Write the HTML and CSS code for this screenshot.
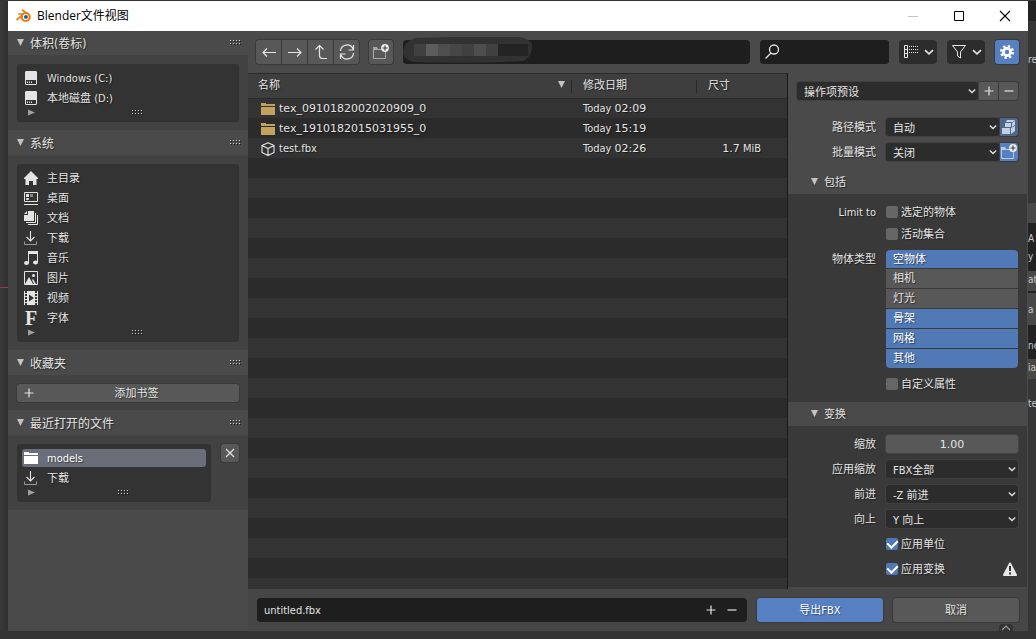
FILE: index.html
```html
<!DOCTYPE html>
<html lang="zh-CN">
<head>
<meta charset="utf-8">
<title>Blender文件视图</title>
<link rel="stylesheet" href="styles.css">
</head>
<body>
<svg class="defs" aria-hidden="true">
  <defs>
    <symbol id="grip" viewBox="0 0 11 5"><path fill="currentColor" d="M0 0h1v1H0zM3 0h1v1H3zM6 0h1v1H6zM9 0h1v1H9zM0 3h1v1H0zM3 3h1v1H3zM6 3h1v1H6zM9 3h1v1H9z"/><path fill="#111" opacity=".7" d="M1 1h1v1H1zM4 1h1v1H4zM7 1h1v1H7zM10 1h1v1h-1zM1 4h1v1H1zM4 4h1v1H4zM7 4h1v1H7zM10 4h1v1h-1z"/></symbol>
    <symbol id="down" viewBox="0 0 7 7"><path fill="#c4c4c4" d="M0 0h7L3.500 7z"/></symbol>
    <symbol id="right" viewBox="0 0 7 7"><path fill="#a0a0a0" d="M0 .5 7 3.500 0 6.500z"/></symbol>
    <symbol id="chev" viewBox="0 0 8 8"><path fill="none" stroke="#e0e0e0" stroke-width="1.400" d="m.8 2.500 3.200 3 3.200-3"/></symbol>
    <symbol id="disk" viewBox="0 0 14 14"><path fill="#e4e4e4" fill-rule="evenodd" d="M2 0h10l1 1v12l-1 1H2l-1-1V1zM2 9v4h10V9z"/><path fill="#e4e4e4" d="M3 10.500h1v1.500H3zM5 10.500h1v1.500H5zM7 10.500h1v1.500H7z"/></symbol>
    <symbol id="save" viewBox="0 0 14 14"><path fill="none" stroke="#e4e4e4" stroke-width="1.100" d="M6.500 0v10M2.500 6l4 4 4-4"/><path fill="none" stroke="#999" d="M.5 10.500v3h12v-3"/></symbol>
    <symbol id="folder" viewBox="0 0 14 14"><path fill="currentColor" d="M0 1h5v1h9v2H0zM0 5h14v8H0z"/></symbol>
    <symbol id="plus" viewBox="0 0 10 10"><path fill="none" stroke="#e4e4e4" stroke-width="1.200" d="M.5 5h9M5 .5v9"/></symbol>
    <symbol id="minus" viewBox="0 0 10 10"><path fill="none" stroke="#e4e4e4" stroke-width="1.200" d="M.5 5h9"/></symbol>
    <symbol id="newfolder" viewBox="0 0 16 16"><path fill="none" stroke="currentColor" d="M.5 14.500v-9h12v9z"/><path fill="currentColor" d="M0 3h4l1 2h3v1H0z"/><circle cx="12" cy="4" r="3.900" fill="#eee"/><path stroke="#444" stroke-width="1.200" d="M9.500 4h5M12 1.500v5"/></symbol>
  </defs>
</svg>

<div class="desk desk-left"></div>

<div class="window">
  <header class="titlebar">
    <svg class="logo" width="16" height="14" viewBox="0 0 16 14"><path d="M1 10.500 8 5H3M6.500 1.200 12 5.500" fill="none" stroke="#e87d0d" stroke-width="1.700" stroke-linecap="round"/><circle cx="9.700" cy="8" r="4" fill="#fff" stroke="#e87d0d" stroke-width="2.200"/><circle cx="9.900" cy="7.900" r="1.900" fill="#265787"/></svg>
    <h1>Blender文件视图</h1>
    <button class="caption" aria-label="最小化"><svg width="12" height="12"><path stroke="#c4c4c4" d="M1 6.500h10"/></svg></button>
    <button class="caption" aria-label="最大化"><svg width="12" height="12"><path fill="none" stroke="#000" d="M1.500 1.500h9v9h-9z"/></svg></button>
    <button class="caption" aria-label="关闭"><svg width="12" height="12"><path stroke="#000" stroke-width="1.100" d="m1 1 10 10M11 1 1 11"/></svg></button>
  </header>

  <div class="content">
    <aside class="sidebar">
      <section>
        <h2 class="side-head"><svg class="tri"><use href="#down"/></svg>体积(卷标)<svg class="grip"><use href="#grip"/></svg></h2>
        <div class="side-body">
          <div class="box">
            <ul class="places">
              <li><svg class="ico"><use href="#disk"/></svg>Windows (C:)</li>
              <li><svg class="ico"><use href="#disk"/></svg>本地磁盘 (D:)</li>
            </ul>
            <div class="box-foot"><svg class="tri"><use href="#right"/></svg><span><svg class="grip"><use href="#grip"/></svg></span></div>
          </div>
        </div>
      </section>
      <section>
        <h2 class="side-head"><svg class="tri"><use href="#down"/></svg>系统<svg class="grip"><use href="#grip"/></svg></h2>
        <div class="side-body">
          <div class="box">
            <ul class="places">
              <li><svg class="ico" viewBox="0 0 14 14"><path fill="#e4e4e4" d="M7 0 0 7v1h1.500v6H5v-4h4v4h3.500V8H14V7z"/></svg>主目录</li>
              <li><svg class="ico" viewBox="0 0 14 14"><path fill="none" stroke="#e4e4e4" d="M.5 1.500h13v9H.5zM0 13.500h14"/><path fill="#e4e4e4" d="M2 3h3v3H2z"/><path fill="#888" d="M6 3h3v3H6z"/><path fill="none" stroke="#e4e4e4" d="M2.500 7.500h2v1h-2z"/></svg>桌面</li>
              <li><svg class="ico" viewBox="0 0 14 14"><path fill="#e4e4e4" d="M4 0h6v10H0V4h4zM0 3l3-3v3z"/><path fill="none" stroke="#e4e4e4" d="M2 11.500h9.500V2M4 13.500h9.500V4"/></svg>文档</li>
              <li><svg class="ico"><use href="#save"/></svg>下载</li>
              <li><svg class="ico" viewBox="0 0 14 14"><path fill="#e4e4e4" d="M4 0h10v11h-1V3H5v9H4z"/><ellipse cx="2.500" cy="12" rx="2.500" ry="1.900" fill="#e4e4e4"/><ellipse cx="11.500" cy="11.500" rx="2.500" ry="1.900" fill="#e4e4e4"/></svg>音乐</li>
              <li><svg class="ico" viewBox="0 0 14 14"><path fill="none" stroke="#e4e4e4" d="M.5.5h13v13H.5z"/><path fill="#e4e4e4" d="M1 13 5 6l4 7zM8 9l1-1 3 5h-2z"/><circle cx="9.500" cy="4.500" r="1.500" fill="#e4e4e4"/></svg>图片</li>
              <li><svg class="ico" viewBox="0 0 14 14"><path fill="#e4e4e4" fill-rule="evenodd" d="M3 0h8v14H3zM5 3.500v7L10 7z"/><path fill="#e4e4e4" d="M0 0h1v14H0zM13 0h1v14h-1zM1 2h2v1H1zM1 5h2v1H1zM1 8h2v1H1zM1 11h2v1H1zM11 2h2v1h-2zM11 5h2v1h-2zM11 8h2v1h-2zM11 11h2v1h-2z"/></svg>视频</li>
              <li><span class="ico font-ico" aria-hidden="true">F</span>字体</li>
            </ul>
            <div class="box-foot"><svg class="tri"><use href="#right"/></svg><span><svg class="grip"><use href="#grip"/></svg></span></div>
          </div>
        </div>
      </section>
      <section>
        <h2 class="side-head"><svg class="tri"><use href="#down"/></svg>收藏夹<svg class="grip"><use href="#grip"/></svg></h2>
        <div class="side-body">
          <button class="btn add-bookmark"><svg width="10" height="10"><use href="#plus"/></svg><span>添加书签</span></button>
        </div>
      </section>
      <section>
        <h2 class="side-head"><svg class="tri"><use href="#down"/></svg>最近打开的文件<svg class="grip"><use href="#grip"/></svg></h2>
        <div class="side-body recent">
          <div class="box">
            <ul class="places">
              <li class="selected"><svg class="ico"><use href="#folder"/></svg>models</li>
              <li><svg class="ico"><use href="#save"/></svg>下载</li>
            </ul>
            <div class="box-foot"><svg class="tri"><use href="#right"/></svg><span><svg class="grip"><use href="#grip"/></svg></span></div>
          </div>
          <button class="btn clear" aria-label="清除"><svg width="10" height="10"><path stroke="#e4e4e4" stroke-width="1.200" d="m1 1 8 8M9 1 1 9"/></svg></button>
        </div>
      </section>
    </aside>

    <main class="main">
      <div class="toolbar">
        <div class="nav">
          <button class="btn" aria-label="后退"><svg width="14" height="14"><path fill="none" stroke="#e4e4e4" stroke-width="1.200" d="M14 7.500H1M5 3.500l-4 4 4 4"/></svg></button>
          <button class="btn" aria-label="前进"><svg width="14" height="14"><path fill="none" stroke="#e4e4e4" stroke-width="1.200" d="M0 7.500h13M9 3.500l4 4-4 4"/></svg></button>
          <button class="btn" aria-label="上级目录"><svg width="14" height="14"><path fill="none" stroke="#e4e4e4" stroke-width="1.200" d="M1.500 4.500l4-4 4 4M5.500.5v10q0 3 3 3h4.500"/></svg></button>
          <button class="btn" aria-label="刷新"><svg width="16" height="16"><path fill="none" stroke="#e4e4e4" stroke-width="1.200" d="M1.500 7A6.500 6.500 0 0 1 14 5M14.500 1v5h-5M14.500 9A6.500 6.500 0 0 1 2 11M1.500 15v-5h5"/></svg></button>
        </div>
        <button class="btn newdir" aria-label="新建目录"><svg width="16" height="16"><use href="#newfolder"/></svg></button>
        <div class="path">
          <input class="field" type="text" aria-label="路径">
          <svg class="smudge" width="129" height="26"><path fill="#323232" d="M12 1Q75-1 116 0q9 1 13 7 1 12-9 17-50 3-110 1Q0 22 0 14 2 4 12 1z"/><path fill="#404040" d="M11 7h12v12H11zM47 7h12v12H47zM83 7h12v12H83z"/><path fill="#5c5c5c" d="M23 7h12v12H23z"/><path fill="#4e4e4e" d="M35 7h12v12H35zM71 7h12v12H71z"/><path fill="#464646" d="M47 7h12v12H47z"/><path fill="#404040" d="M59 7h12v12H59z"/><path fill="#242424" d="M95 7h30v12H95z"/></svg>
        </div>
        <div class="search">
          <svg width="16" height="16"><circle cx="10" cy="5.500" r="4.500" fill="none" stroke="#e4e4e4" stroke-width="1.300"/><path stroke="#e4e4e4" stroke-width="1.300" d="M7 9 1.500 14.500"/></svg>
          <input class="field" type="text" aria-label="搜索">
        </div>
        <button class="menu-btn" aria-label="显示模式"><svg width="16" height="14"><path fill="none" stroke="#e4e4e4" d="M1.500.5h3v12h-3zM1 4.500h4M1 8.500h4"/><path stroke="#e4e4e4" stroke-dasharray="1 1" d="M6 1.500h9M6 4.500h9M6 7.500h9"/></svg><svg width="10" height="10"><use href="#chev"/></svg></button>
        <button class="menu-btn" aria-label="过滤"><svg width="16" height="14"><path fill="none" stroke="#e4e4e4" d="M1.500.5h13L9.500 7v6l-3-2V7z"/></svg><svg width="10" height="10"><use href="#chev"/></svg></button>
        <button class="btn primary gear" aria-label="选项"><svg width="14" height="14" viewBox="0 0 14 14"><circle cx="7" cy="7" r="5.700" fill="none" stroke="#fff" stroke-width="2.600" stroke-dasharray="2.300 2.177"/><circle cx="7" cy="7" r="3.600" fill="none" stroke="#fff" stroke-width="2.800"/></svg></button>
      </div>

      <div class="middle">
        <div class="files">
          <table>
            <thead>
              <tr><th class="c-name"><div>名称<svg class="tri"><use href="#down"/></svg></div></th><th class="c-date"><div>修改日期</div></th><th class="c-size"><div>尺寸</div></th></tr>
            </thead>
            <tbody>
              <tr><td><div class="file num"><svg class="ico dir"><use href="#folder"/></svg>tex_0910182002020909_0</div></td><td>Today <span class="num">02:09</span></td><td></td></tr>
              <tr><td><div class="file num"><svg class="ico dir"><use href="#folder"/></svg>tex_1910182015031955_0</div></td><td>Today <span class="num">15:19</span></td><td></td></tr>
              <tr><td><div class="file"><svg class="ico" viewBox="0 0 14 14"><path fill="none" stroke="#e4e4e4" stroke-width="1.100" stroke-linejoin="round" d="M7 .7 13 3.500v7L7 13.400 1 10.500v-7zM1 3.500l6 3 6-3M7 6.500v7"/></svg>test.fbx</div></td><td>Today <span class="num">02:26</span></td><td class="size"><span class="num">1.7</span> MiB</td></tr>
            </tbody>
          </table>
        </div>

        <aside class="options">
          <div class="top-opts">
            <div class="preset">
              <div class="select"><select aria-label="操作项预设"><option>操作项预设</option></select><svg><use href="#chev"/></svg></div>
              <button class="btn" aria-label="添加预设"><svg width="10" height="10"><use href="#plus"/></svg></button>
              <button class="btn" aria-label="删除预设"><svg width="10" height="10"><use href="#minus"/></svg></button>
            </div>
            <div class="row">
              <label for="pathmode">路径模式</label>
              <div class="joined"><div class="select"><select id="pathmode"><option>自动</option></select><svg><use href="#chev"/></svg></div><button class="btn primary muted" aria-label="内嵌纹理"><svg width="16" height="16"><path fill="#c3d0e4" d="M6 1h8l-2 2H5zM4 4h6v4H4zM11 4l3-2v4l-3 2zM1 9h8v6H1zM10 9l4-2v5l-4 3z"/></svg></button></div>
            </div>
            <div class="row">
              <label for="batch">批量模式</label>
              <div class="joined"><div class="select"><select id="batch"><option>关闭</option></select><svg><use href="#chev"/></svg></div><button class="btn primary pale" aria-label="批处理自建目录"><svg width="16" height="16"><use href="#newfolder"/></svg></button></div>
            </div>
          </div>

          <h2 class="sub-head"><svg class="tri"><use href="#down"/></svg>包括</h2>
          <div class="sub-body include">
            <div class="row"><span class="lbl">Limit to</span><label class="check"><input type="checkbox">选定的物体</label></div>
            <div class="row second"><span class="lbl"></span><label class="check"><input type="checkbox">活动集合</label></div>
            <div class="row types-row">
              <span class="lbl">物体类型</span>
              <div class="types">
                <button class="on" aria-pressed="true">空物体</button>
                <button aria-pressed="false">相机</button>
                <button aria-pressed="false">灯光</button>
                <button class="on" aria-pressed="true">骨架</button>
                <button class="on" aria-pressed="true">网格</button>
                <button class="on" aria-pressed="true">其他</button>
              </div>
            </div>
            <div class="row"><span class="lbl"></span><label class="check"><input type="checkbox">自定义属性</label></div>
          </div>

          <h2 class="sub-head"><svg class="tri"><use href="#down"/></svg>变换</h2>
          <div class="sub-body transform">
            <div class="row"><label for="scale">缩放</label><input id="scale" class="number num" type="text" value="1.00"></div>
            <div class="row"><label for="apply">应用缩放</label><div class="select"><select id="apply"><option>FBX全部</option></select><svg><use href="#chev"/></svg></div></div>
            <div class="row"><label for="fwd">前进</label><div class="select"><select id="fwd"><option>-Z 前进</option></select><svg><use href="#chev"/></svg></div></div>
            <div class="row"><label for="up">向上</label><div class="select"><select id="up"><option>Y 向上</option></select><svg><use href="#chev"/></svg></div></div>
            <div class="row"><span class="lbl"></span><label class="check"><input type="checkbox" checked>应用单位</label></div>
            <div class="row"><span class="lbl"></span><div class="warn-row"><label class="check"><input type="checkbox" checked>应用变换</label><svg width="16" height="14"><path fill="#e8e8e8" stroke="#e8e8e8" stroke-width="2" stroke-linejoin="round" d="M8 1.500 14 13H2z"/><path stroke="#333" stroke-width="2" d="M8 4v5M8 10.500v2"/></svg></div></div>
          </div>
        </aside>
      </div>

      <footer class="footer">
        <div class="filename">
          <input class="field" type="text" value="untitled.fbx" aria-label="文件名">
          <button aria-label="递增"><svg width="10" height="10"><use href="#plus"/></svg></button>
          <button aria-label="递减"><svg width="10" height="10"><use href="#minus"/></svg></button>
        </div>
        <button class="btn primary big">导出FBX</button>
        <button class="btn big">取消</button>
        <svg class="expander" width="14" height="7"><path fill="#333" d="M0 7V4q0-4 4-4h6q4 0 4 4v3z"/><path fill="none" stroke="#999" stroke-width="1.200" d="m3 6 4-4 4 4"/></svg>
      </footer>
    </main>
  </div>
</div>

<div class="desk desk-right" aria-hidden="true">
  <div class="s1">re</div>
  <div class="s2"></div>
  <div class="s3">A<br>y</div>
  <div class="s4">at</div>
  <div class="s5">a</div>
  <div class="s6">ne</div>
  <div class="s4">ia</div>
  <div class="s7">te</div>
</div>
</body>
</html>
```
FILE: styles.css
```css
* { box-sizing: border-box; }

body {
  margin: 0;
  min-height: 100vh;
  display: grid;
  grid-template-columns: 8px minmax(0, 1fr) 8px;
  padding: 1px 0 8px;
  background: #343434;
  color: #e4e4e4;
  font: 11px/20px "DejaVu Sans Condensed", "DejaVu Sans", "Noto Sans CJK SC", sans-serif;
  overflow: hidden;
}

h1, h2, ul { margin: 0; padding: 0; font-weight: normal; list-style: none; }
svg { display: block; flex: none; }
button, input, select { font: inherit; color: inherit; margin: 0; padding: 0; border: 0; }
button { display: flex; align-items: center; justify-content: center; }
.defs { position: absolute; width: 0; height: 0; }
.num { font-family: "DejaVu Sans", sans-serif; }

.desk-left {
  background: linear-gradient(#933b4c, #933b4c) 0 286px / 8px 1px no-repeat, linear-gradient(90deg, #3a3a3a, #303030);
}

.desk-right { overflow: hidden; background: #363636; color: #c8c8c8; font-size: 10px; line-height: 18px; }
.s1 { height: 202px; padding-top: 50px; background: linear-gradient(#222 20px, #353535 20px); }
.s2 { height: 20px; background: #484848; }
.s3 { height: 48px; padding-top: 7px; background: #222; }
.s4 { height: 20px; background: #484848; }
.s5 { height: 34px; padding-top: 8px; background: #484848; border-top: 2px solid #222; }
.s6 { height: 34px; padding-top: 12px; background: #222; }
.s7 { padding-top: 16px; }

.window { display: flex; flex-direction: column; background: #464646; min-width: 0; }

.titlebar { display: flex; align-items: center; height: 30px; background: #fff; color: #000; padding-left: 8px; }
.titlebar h1 { flex: 1; margin-left: 5px; font: 12px/18px "Open Sans", "Noto Sans CJK SC", sans-serif; }
.caption { width: 46px; height: 28px; background: none; }

.content { flex: 1; display: grid; grid-template-columns: 240px minmax(0, 1fr); }

.sidebar { background: #4a4a4a; text-shadow: 1px 1px 1px rgba(0, 0, 0, .5); }
.side-head { display: flex; align-items: center; height: 25px; padding: 2px 7px 0 9px; gap: 6px; font-size: 12px; }
section:first-child .side-head { height: 24px; }
.side-head .grip { margin: 0 0 3px auto; }
.side-head .tri { margin-bottom: 3px; }
.tri { width: 7px; height: 7px; }
.grip { width: 11px; height: 5px; color: #d0d0d0; }
.side-body { padding: 9px 9px 8px; background: #424242; }
.box { flex: 1; padding-top: 5px; background: #333; border-radius: 3px; }
.places { display: grid; gap: 2px; }
.places li { display: flex; align-items: flex-start; gap: 9px; height: 18px; margin: 0 5px; padding: 0 2px; border-radius: 3px; }
.places .ico { margin-top: 2px; }
.places .selected { background: #696e79; color: #fff; }
.ico { width: 14px; height: 14px; }
.font-ico { font: bold 20px/14px "Liberation Serif", serif; text-align: center; text-shadow: none; }
.box-foot { display: flex; align-items: center; height: 15px; padding: 0 0 4px 11px; }
.box-foot span { flex: 1; display: flex; justify-content: center; }
.recent { display: flex; align-items: flex-start; gap: 10px; }

.btn { height: 18px; background: #585858; border-radius: 3px; box-shadow: 0 0 0 1px #3a3a3a; text-shadow: 1px 1px 1px rgba(0, 0, 0, .4); }
.primary { background: #5680c2; color: #fff; }
.add-bookmark { width: 100%; padding-left: 7px; }
.add-bookmark span { flex: 1; padding-top: 2px; }
.clear { width: 18px; }

.main { display: flex; flex-direction: column; min-width: 0; }
.toolbar { display: flex; gap: 10px; height: 42px; padding: 9px 9px 9px 8px; background: #4a4a4a; }
.nav { display: grid; grid-template-columns: repeat(4, 25px); gap: 1px; }
.nav .btn { border-radius: 0; }
.nav .btn:first-child { border-radius: 3px 0 0 3px; }
.nav .btn:last-child { border-radius: 0 3px 3px 0; }
.toolbar .btn { height: 24px; }
.newdir { width: 24px; color: #a8a8a8; }
.gear { width: 24px; }
.field { width: 100%; height: 24px; padding: 0 7px; background: #1e1e1e; border-radius: 4px; outline: 0; }
.path { position: relative; flex: 1; min-width: 0; }
.smudge { position: absolute; left: 0; top: -3px; }
.search { display: flex; align-items: center; width: 129px; padding-left: 4px; background: #1e1e1e; border-radius: 4px; }
.search .field { flex: 1; min-width: 0; }
.menu-btn { width: 38px; height: 24px; gap: 5px; background: #2c2c2c; border-radius: 4px; }

.middle { flex: 1; display: grid; grid-template-columns: minmax(0, 1fr) 240px; }
.files { background: repeating-linear-gradient(#333 0 20px, #2b2b2b 20px 40px) 0 25px; border-right: 1px solid #191919; text-shadow: 1px 1px 1px rgba(0, 0, 0, .5); }
table { width: 100%; table-layout: fixed; border-collapse: collapse; }
th { height: 25px; padding: 0; font-weight: normal; text-align: left; background: #3e3e3e; border: solid #2a2a2a; border-width: 1px 0; }
th div { display: flex; align-items: center; justify-content: space-between; height: 13px; padding: 0 6px 0 11px; border-right: 1px solid #292929; }
.c-name div { padding-left: 10px; }
.c-name .tri { margin-bottom: 3px; }
.c-date { width: 125px; }
.c-size { width: 90px; }
.c-size div { border: 0; }
td { height: 20px; padding: 0 0 0 11px; }
.file { display: flex; align-items: center; gap: 4px; margin-left: 2px; }
.dir { color: #c2a25c; }
.size { padding: 0 26px 0 0; text-align: right; }

.options { background: #4a4a4a; padding-bottom: 2px; text-shadow: 1px 1px 1px rgba(0, 0, 0, .5); }
.top-opts { padding: 9px 10px 9px 9px; }
.preset { display: grid; grid-template-columns: minmax(0, 1fr) 19px 19px; gap: 1px; margin-bottom: 18px; }
.preset .btn { border-radius: 0; }
.preset .btn:last-child { border-radius: 0 3px 3px 0; }
.row { display: grid; grid-template-columns: 79px minmax(0, 1fr); gap: 10px; height: 18px; }
.row > label, .lbl { text-align: right; }
.row > .check { text-align: left; }
.top-opts .row + .row { margin-top: 7px; }
.joined { display: grid; grid-template-columns: minmax(0, 1fr) 18px; gap: 1px; }
.joined .btn { border-radius: 0 3px 3px 0; }
.muted { background: #50678c; }
.pale { color: #b9cbe8; }
.select { position: relative; }
.select select { display: block; width: 100%; height: 18px; padding: 1px 7px 0; appearance: none; background: #2c2c2c; border-radius: 3px; box-shadow: 0 0 0 1px #404040; }
.select svg { position: absolute; right: 2px; top: 5px; width: 8px; height: 8px; pointer-events: none; }
.sub-head { display: flex; align-items: center; gap: 6px; height: 24px; padding: 2px 0 0 23px; font-size: 11px; }
.sub-head .tri { margin-bottom: 4px; }
.sub-body { padding: 9px 9px 9px; background: #393939; border-right: 1px solid #4a4a4a; }
.second { margin-top: 4px; }
.types-row { height: auto; margin: 7px 0; }
.types { display: grid; gap: 1px; overflow: hidden; border-radius: 4px; }
.types button { height: 19px; justify-content: flex-start; padding: 1px 0 0 7px; background: #585858; text-shadow: inherit; }
.types button:first-child { height: 18px; }
.types .on { background: #5079b5; color: #fff; }
.check { display: flex; align-items: flex-start; gap: 3px; }
.check input { appearance: none; width: 12px; height: 12px; margin-top: 3px; background: #666; border-radius: 2px; display: grid; place-items: center; }
.check input:checked { background: #5079b5; }
.check input:checked::after { content: ""; width: 5px; height: 8px; border: solid #fff; border-width: 0 2px 2px 0; transform: translateY(-1px) rotate(45deg); }
.transform { display: grid; gap: 7px; }
.number { width: 100%; height: 18px; padding-top: 1px; text-align: center; background: #585858; border-radius: 3px; box-shadow: 0 0 0 1px #444; }
.warn-row { display: flex; align-items: center; justify-content: space-between; height: 18px; }
.warn-row .check { height: 18px; }

.footer { position: relative; display: grid; grid-template-columns: minmax(0, 1fr) 126px 126px; gap: 10px; height: 42px; padding: 9px; background: #464646; }
.footer .btn { height: 24px; padding-top: 2px; }
.filename { display: flex; align-items: center; gap: 11px; padding-right: 10px; height: 24px; background: #1e1e1e; border-radius: 4px; }
.filename .field { flex: 1; min-width: 0; }
.filename button { background: none; }
.expander { position: absolute; right: 15px; bottom: 0; }
```
